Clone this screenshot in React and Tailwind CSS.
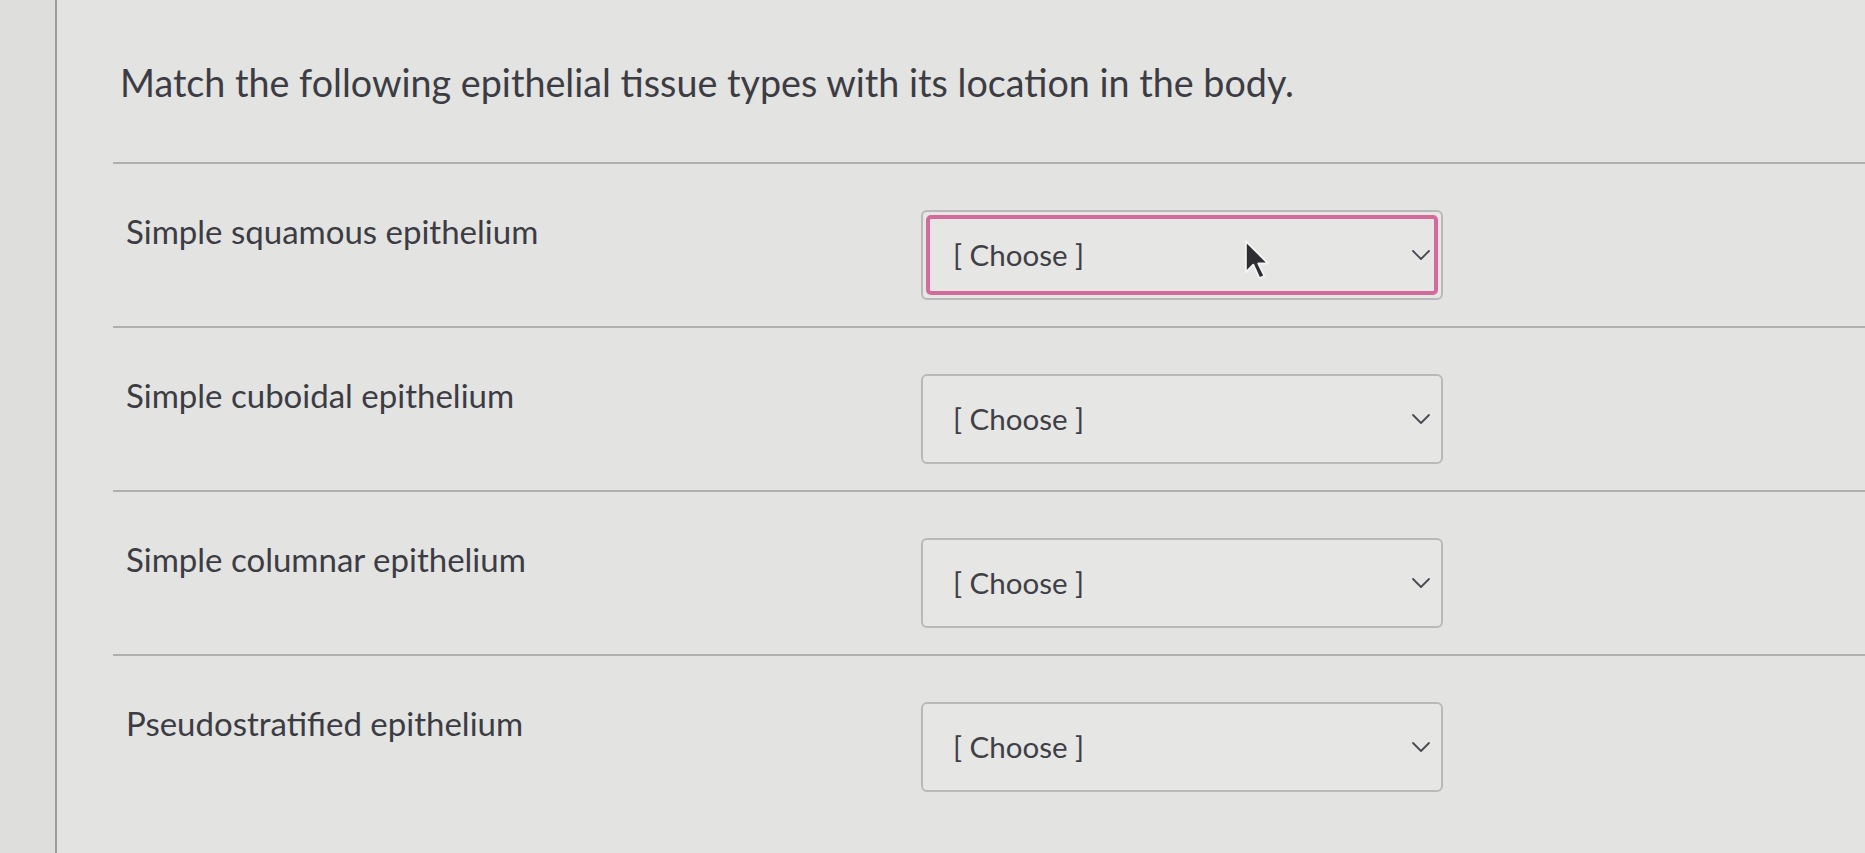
import React from 'react';

const rows = [
    'Simple squamous epithelium',
    'Simple cuboidal epithelium',
    'Simple columnar epithelium',
    'Pseudostratified epithelium',
];

const Chevron = () => (
    <svg width="22" height="14" viewBox="0 0 22 14" fill="none">
        <path d="M3 3l8 8 8-8" stroke="#4a4a52" strokeWidth="1.8" strokeLinecap="round" strokeLinejoin="round" />
    </svg>
);

const Cursor = () => (
    <svg width="28" height="42" viewBox="0 0 22 34" className="absolute left-[320px] top-[28px]">
        <path d="M2 1v25l6-6 5 11 4-2-5-10h8z" fill="#2d2d33" stroke="#f4f4f4" strokeWidth="1.5" strokeLinejoin="round" />
    </svg>
);

const ChooseSelect = ({ focused }) => (
    <div className="relative w-[522px] h-[90px] rounded-[6px] border-2 border-[#b9b9b9] bg-[#e6e6e4] p-[3px]">
        <div
            className={
                focused
                    ? 'h-full rounded-[5px] border-[4px] border-[#d46a9b] flex items-center justify-between pl-[23px] pr-[2px]'
                    : 'h-full flex items-center justify-between pl-[27px] pr-[6px]'
            }
        >
            <span className="text-[29.5px] text-[#3f3f47]">[ Choose ]</span>
            <Chevron />
        </div>
        {focused && <Cursor />}
    </div>
);

export default function App() {
    return (
        <div
            className="w-[1865px] h-[853px] overflow-hidden bg-[#e3e3e1] flex"
            style={{ fontFamily: 'Lato, "Noto Sans", sans-serif' }}
        >
            <div className="w-[57px] shrink-0 border-r-2 border-[#9d9d9d] bg-[#dededc]" />
            <div className="flex-1 pl-[56px]">
                <h1 className="pt-[60px] pl-[7px] text-[37.7px] leading-[46px] text-[#3c3c44]">
                    Match the following epithelial tissue types with its location in the body.
                </h1>
                <div className="mt-[56px]">
                    {rows.map((label, i) => (
                        <div key={label} className="border-t-2 border-[#b0b0b0] h-[164px] flex pt-[46px]">
                            <div className="w-[808px] pl-[13px] pt-[1px] text-[33px] leading-[40px] text-[#3c3c44]">
                                {label}
                            </div>
                            <ChooseSelect focused={i === 0} />
                        </div>
                    ))}
                </div>
            </div>
        </div>
    );
}
